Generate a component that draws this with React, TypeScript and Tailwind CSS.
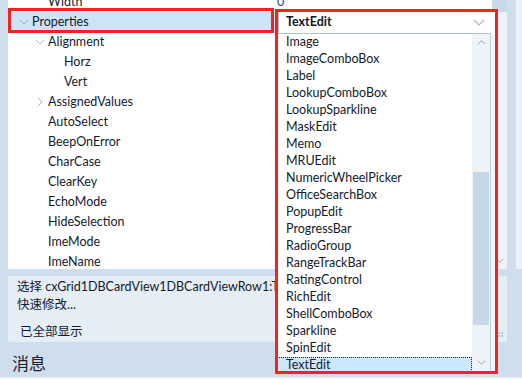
import type { ReactNode } from 'react'

const font = "font-['Lato','Noto_Sans_CJK_SC',sans-serif]"

const dropItems = [
  'Image',
  'ImageComboBox',
  'Label',
  'LookupComboBox',
  'LookupSparkline',
  'MaskEdit',
  'Memo',
  'MRUEdit',
  'NumericWheelPicker',
  'OfficeSearchBox',
  'PopupEdit',
  'ProgressBar',
  'RadioGroup',
  'RangeTrackBar',
  'RatingControl',
  'RichEdit',
  'ShellComboBox',
  'Sparkline',
  'SpinEdit',
  'TextEdit',
]

type Row = { label: string; level: number; chevron?: 'down' | 'right'; selected?: boolean; value?: string }

const rows: Row[] = [
  { label: 'Width', level: 1, value: '0' },
  { label: 'Properties', level: 0, chevron: 'down', selected: true },
  { label: 'Alignment', level: 1, chevron: 'down' },
  { label: 'Horz', level: 2 },
  { label: 'Vert', level: 2 },
  { label: 'AssignedValues', level: 1, chevron: 'right' },
  { label: 'AutoSelect', level: 1 },
  { label: 'BeepOnError', level: 1 },
  { label: 'CharCase', level: 1 },
  { label: 'ClearKey', level: 1 },
  { label: 'EchoMode', level: 1 },
  { label: 'HideSelection', level: 1 },
  { label: 'ImeMode', level: 1 },
  { label: 'ImeName', level: 1 },
]

function Chevron({ dir, className }: { dir: 'down' | 'right' | 'up'; className?: string }) {
  const d = dir === 'down' ? 'M1 1 L6 6 L11 1' : dir === 'up' ? 'M1 6 L6 1 L11 6' : 'M1 1 L6 6 L1 11'
  const box = dir === 'right' ? '0 0 7 12' : '0 0 12 7'
  return (
    <svg viewBox={box} className={className} fill="none" stroke="currentColor" strokeWidth={1.1}>
      <path d={d} />
    </svg>
  )
}

function TreeRow({ row }: { row: Row }) {
  const indent = ['pl-[7px]', 'pl-[23px]', 'pl-[39px]'][row.level]
  return (
    <div className="flex h-[20px] shrink-0">
      <div className={`flex w-[268px] items-center ${indent} ${row.selected ? 'bg-[#cce4f7]' : ''}`}>
        <span className="flex w-[17px] shrink-0 items-center justify-center text-[#aaaaaa]">
          {row.chevron === 'down' && <Chevron dir="down" className="h-[6px] w-[10px]" />}
          {row.chevron === 'right' && <Chevron dir="right" className="h-[10px] w-[6px]" />}
        </span>
        <span className="text-[12.5px] text-[#141a2e]">{row.label}</span>
      </div>
      <div className="flex flex-1 items-center pl-[1px] text-[12.5px] text-[#1d3aa6]">{row.value}</div>
    </div>
  )
}

function Box({ children, className }: { children?: ReactNode; className?: string }) {
  return <div className={className}>{children}</div>
}

export default function App() {
  return (
    <div className={`relative h-[379px] w-[522px] overflow-hidden bg-[#cfdeed] ${font}`}>
      <div className="flex h-[269px]">
        <Box className="w-[8px] shrink-0" />
        <div className="flex w-[484px] flex-col overflow-hidden bg-white">
          <div className="-mt-[8px] flex flex-col">
            {rows.map((r) => (
              <TreeRow key={r.label} row={r} />
            ))}
          </div>
        </div>
        <div className="flex w-[15px] flex-col bg-[#eef3f8]">
          <div className="h-[12px] bg-[#c8d9e8]" />
          <div className="flex-1" />
          <div className="flex h-[18px] items-center justify-center text-[#8a8a8a]">
            <Chevron dir="down" className="h-[5px] w-[8px]" />
          </div>
        </div>
        <Box className="w-[9px] shrink-0" />
        <Box className="flex-1 bg-[#e9f0f7]" />
      </div>

      <div className="mt-[7px] flex h-[66px]">
        <Box className="w-[8px] shrink-0" />
        <div className="relative flex w-[499px] flex-col bg-[#e5edf5] pt-[2px] pl-[9px] text-[12.5px] leading-[18px] text-[#141a2e]">
          <span className="whitespace-nowrap">选择 cxGrid1DBCardView1DBCardViewRow1:TcxGridDBCardViewRow</span>
          <span>快速修改...</span>
          <span className="mt-[9px] pl-[3px]">已全部显示</span>
          <div className="absolute right-[4px] bottom-[5px] grid grid-cols-2 gap-[1px]">
            <span className="size-[2px] bg-[#b5c5d5]" />
            <span className="size-[2px] bg-[#b5c5d5]" />
            <span className="size-[2px] bg-[#b5c5d5]" />
            <span className="size-[2px] bg-[#b5c5d5]" />
          </div>
        </div>
      </div>

      <div className="flex h-[35px] items-center pt-[9px] pl-[12px] text-[17px] text-[#1a1f30]">消息</div>
      <Box className="absolute right-0 bottom-0 left-0 h-[2px] bg-[#eef3f8]" />

      {/* annotation around the selected tree row */}
      <div className="absolute top-[8px] left-[8px] h-[25px] w-[266px] border-[3px] border-[#f5231d]" />

      {/* dropdown editor list */}
      <div className="absolute top-[9px] left-[275px] flex h-[365px] w-[223px] flex-col border-[3px] border-[#f5231d] bg-white">
        <div className="mr-[4px] flex h-[22px] shrink-0 items-center justify-between border-b border-l border-[#aac1d6] pr-[6px] pl-[7px]">
          <span className="text-[12.5px] font-bold text-[#0f1424]">TextEdit</span>
          <Chevron dir="down" className="h-[7px] w-[12px] text-[#b4b4b4]" />
        </div>
        <div className="flex min-h-0 flex-1">
          <div className="flex flex-1 flex-col overflow-hidden">
            {dropItems.map((item) => (
              <div
                key={item}
                className={`flex h-[17px] shrink-0 items-center pl-[8px] text-[12.5px] text-[#141a2e] ${
                  item === 'TextEdit' ? 'ml-[-1px] border border-dotted border-[#202020] bg-[#cce8ff]' : ''
                }`}
              >
                {item}
              </div>
            ))}
          </div>
          <div className="flex w-[18px] shrink-0 flex-col bg-[#eef3f8]">
            <div className="flex h-[17px] items-center justify-center text-[#8a8a8a]">
              <Chevron dir="up" className="h-[5px] w-[9px]" />
            </div>
            <div className="h-[121px]" />
            <div className="mx-[1px] h-[153px] bg-[#c6d8e7]" />
            <div className="flex-1" />
            <div className="flex h-[17px] items-center justify-center text-[#8a8a8a]">
              <Chevron dir="down" className="h-[5px] w-[9px]" />
            </div>
          </div>
          <div className="w-[1px] shrink-0 bg-[#b9cfe2]" />
          <div className="w-[4px] shrink-0 bg-[#f2f6fa]" />
        </div>
      </div>
    </div>
  )
}
